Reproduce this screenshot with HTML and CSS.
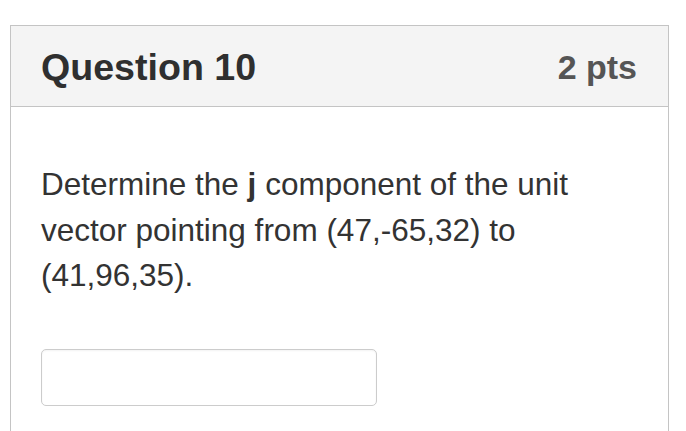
FILE: index.html
```html
<!DOCTYPE html>
<html>
<head>
<meta charset="utf-8">
<link rel="stylesheet" href="styles.css">
</head>
<body>
<div class="card">
  <div class="header">
    <h2 class="title">Question 10</h2>
    <div class="pts">2 pts</div>
  </div>
  <div class="body">
    <p class="text">Determine the <b>j</b> component of the unit vector pointing from (47,-65,32) to (41,96,35).</p>
    <input class="answer" type="text">
  </div>
</div>
</body>
</html>
```

FILE: styles.css
```css
html, body {
  margin: 0;
  padding: 0;
  background: #ffffff;
}
body {
  padding: 25px 0 0 10px;
  font-family: "Liberation Sans", Arial, sans-serif;
}
.card {
  width: 657px;
  border: 1px solid #c4c4c4;
  border-bottom: none;
  height: 420px;
}
.header {
  display: flex;
  justify-content: space-between;
  align-items: center;
  height: 80px;
  padding: 2px 31px 0 30px;
  box-sizing: border-box;
  height: 81px;
  background: #f4f4f4;
  border-bottom: 1px solid #c4c4c4;
}
.title {
  margin: 0;
  font-size: 37.6px;
  font-weight: bold;
  color: #2f2f2f;
}
.pts {
  font-size: 34px;
  font-weight: bold;
  color: #555555;
}
.body {
  padding: 55px 30px 0 30px;
}
.text {
  margin: 0;
  font-size: 31.5px;
  line-height: 45.5px;
  color: #333333;
  width: 560px;
}
.text b {
  font-weight: bold;
}
.answer {
  display: block;
  box-sizing: border-box;
  margin-top: 50px;
  width: 336px;
  height: 57px;
  border: 1px solid #cccccc;
  border-radius: 5px;
  background: #fff;
  box-shadow: inset 0 1px 2px rgba(0,0,0,0.05);
  outline: none;
}
```
